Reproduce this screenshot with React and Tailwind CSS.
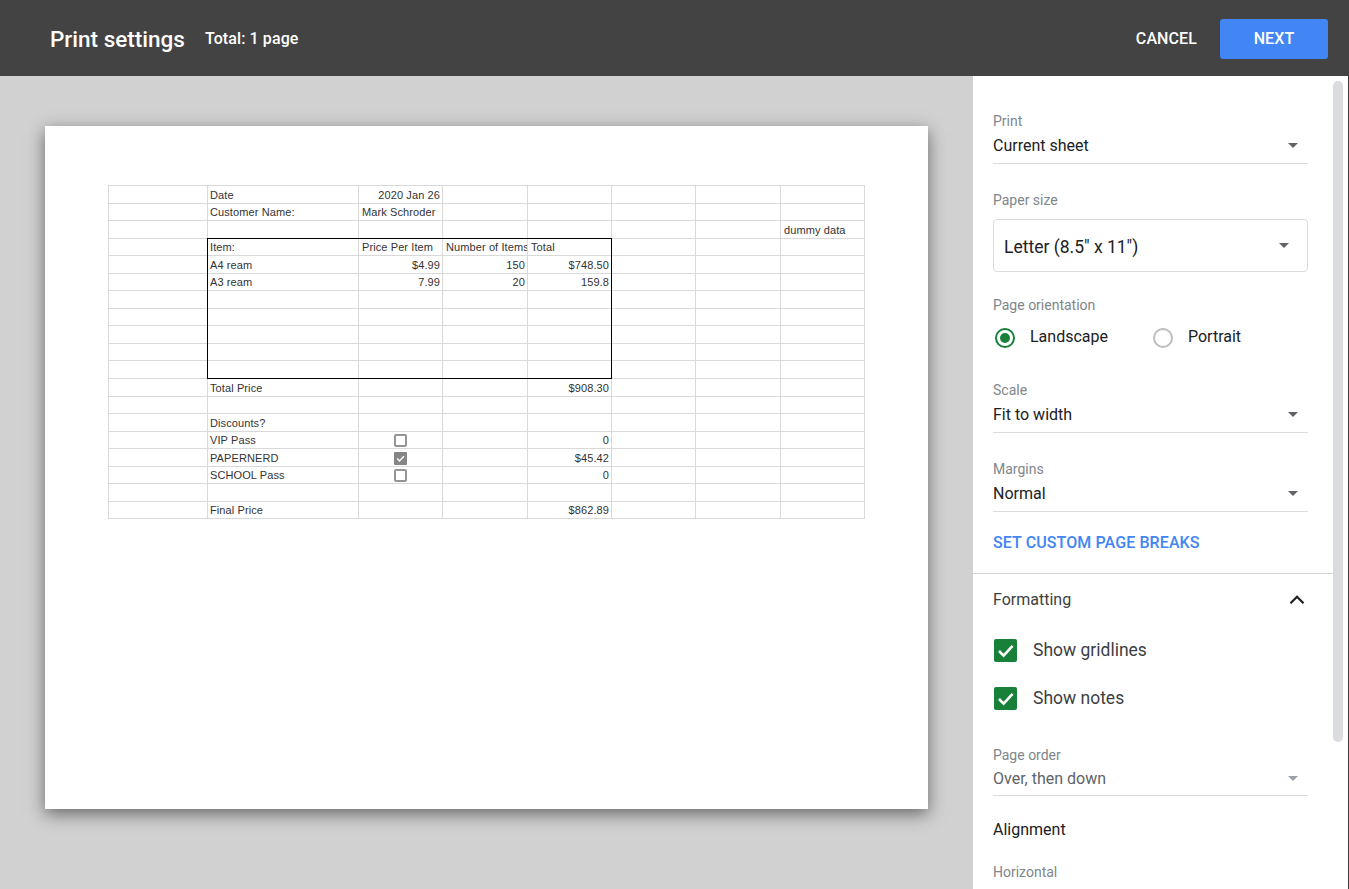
import React from "react";

const rows = [
  { h: 18, cells: { 1: "Date", 2: ["2020 Jan 26", "r"] } },
  { h: 17, cells: { 1: "Customer Name:", 2: "Mark Schroder" } },
  { h: 18, cells: { 7: "dummy data" } },
  { h: 17, cells: { 1: "Item:", 2: "Price Per Item", 3: "Number of Items", 4: "Total" } },
  { h: 18, cells: { 1: "A4 ream", 2: ["$4.99", "r"], 3: ["150", "r"], 4: ["$748.50", "r"] } },
  { h: 17, cells: { 1: "A3 ream", 2: ["7.99", "r"], 3: ["20", "r"], 4: ["159.8", "r"] } },
  { h: 18, cells: {} },
  { h: 17, cells: {} },
  { h: 18, cells: {} },
  { h: 17, cells: {} },
  { h: 18, cells: {} },
  { h: 18, cells: { 1: "Total Price", 4: ["$908.30", "r"] } },
  { h: 17, cells: {} },
  { h: 18, cells: { 1: "Discounts?" } },
  { h: 17, cells: { 1: "VIP Pass", 2: ["off", "box"], 4: ["0", "r"] } },
  { h: 18, cells: { 1: "PAPERNERD", 2: ["on", "box"], 4: ["$45.42", "r"] } },
  { h: 17, cells: { 1: "SCHOOL Pass", 2: ["off", "box"], 4: ["0", "r"] } },
  { h: 18, cells: {} },
  { h: 17, cells: { 1: "Final Price", 4: ["$862.89", "r"] } },
];

const colWidths = [99, 151, 84, 85, 84, 84, 85, 84];

function SheetBox({ checked }) {
  if (checked) {
    return (
      <span className="flex h-[13px] w-[13px] items-center justify-center rounded-[1px] bg-[#858585]">
        <svg width="11" height="11" viewBox="0 0 11 11" fill="none">
          <path d="M2.2 5.6 4.5 7.9 8.9 3.2" stroke="#fff" strokeWidth="1.4" />
        </svg>
      </span>
    );
  }
  return <span className="block h-[13px] w-[13px] rounded-[2px] border-2 border-[#959595] bg-white" />;
}

function Cell({ value, width, height, col }) {
  const [text, kind] = Array.isArray(value) ? value : [value, "l"];
  let inner = null;
  if (kind === "box") {
    inner = <SheetBox checked={text === "on"} />;
  } else if (text) {
    inner = <span className="whitespace-nowrap">{text}</span>;
  }
  // odd rows are a pixel shorter, so their text sits a pixel higher
  const top = kind === "box" || height === 17 ? "pt-px" : "pt-[2px]";
  const align =
    kind === "box" ? "justify-center" : kind === "r" ? "justify-end pr-[2px]" : col === 1 ? "pl-[2px]" : "pl-[3px]";
  return (
    <div
      style={{ width, height }}
      className={`flex shrink-0 items-center overflow-hidden border-r border-b border-[#d9d9d9] ${top} ${align}`}
    >
      {inner}
    </div>
  );
}

function Sheet() {
  return (
    <div className="relative w-[757px] border-t border-l border-[#d9d9d9] font-['Liberation_Sans',sans-serif] text-[11px] tracking-[0.1px] text-[#333]">
      {rows.map((row, i) => (
        <div key={i} className="flex">
          {colWidths.map((w, c) => (
            <Cell key={c} value={row.cells[c]} width={w} height={row.h} col={c} />
          ))}
        </div>
      ))}
      {/* black range border over the item block */}
      <div className="absolute top-[52px] left-[98px] h-[141px] w-[405px] border border-black" />
    </div>
  );
}

function Caret({ color = "#5f6368", className = "" }) {
  return (
    <svg width="10" height="5" viewBox="0 0 10 5" className={className}>
      <path d="M0 0h10L5 5z" fill={color} />
    </svg>
  );
}

function SelectField({ label, value, muted, className = "" }) {
  return (
    <div className={`w-[315px] ${className}`}>
      <div className="text-[14px] leading-[18px] text-[#80868b]">{label}</div>
      <div
        className={`flex items-center justify-between border-b border-[#dadce0] pr-[10px] pb-[2px] ${
          muted ? "h-[32px]" : "h-[34px]"
        }`}
      >
        <span className={`text-[16px] ${muted ? "text-[#5f6368]" : "text-[#202124]"}`}>{value}</span>
        <Caret color={muted ? "#9aa0a6" : "#5f6368"} />
      </div>
    </div>
  );
}

function Radio({ label, checked }) {
  return (
    <div className="flex items-center gap-[15px]">
      <span
        className={`flex h-[20px] w-[20px] items-center justify-center rounded-full border-2 ${
          checked ? "border-[#188038]" : "border-[#bdbdbd]"
        }`}
      >
        {checked && <span className="h-[10px] w-[10px] rounded-full bg-[#188038]" />}
      </span>
      <span className="-mt-[1px] text-[16px] text-[#202124]">{label}</span>
    </div>
  );
}

function CheckRow({ label }) {
  return (
    <div className="flex h-[24px] items-center gap-[16px] pl-px">
      <span className="flex h-[23px] w-[23px] items-center justify-center rounded-[2px] bg-[#188038]">
        <svg width="17" height="17" viewBox="0 0 17 17" fill="none">
          <path d="M2 9 6.6 13.6 15.6 3.8" stroke="#fff" strokeWidth="2.6" />
        </svg>
      </span>
      <span className="text-[17.5px] text-[#3c4043]">{label}</span>
    </div>
  );
}

function Sidebar() {
  return (
    <aside className="relative w-[376px] shrink-0 overflow-hidden border-r border-[#3a3a3a] bg-white">
      {/* scrollbar */}
      <div className="absolute top-[5px] left-[360px] h-[661px] w-[10px] rounded-[5px] bg-[#dadce0]" />

      <div className="px-[20px] pt-[36px]">
        <SelectField label="Print" value="Current sheet" />

        <div className="mt-[27px] text-[14px] leading-[18px] text-[#80868b]">Paper size</div>
        <div className="mt-[10px] flex h-[53px] w-[315px] items-center justify-between rounded-[4px] border border-[#dadce0] pr-[18px] pl-[10px]">
          <span className="pt-[4px] text-[17.5px] text-[#202124]">Letter (8.5" x 11")</span>
          <Caret />
        </div>

        <div className="mt-[24px] text-[14px] leading-[18px] text-[#80868b]">Page orientation</div>
        <div className="mt-[12px] flex gap-[45px] pl-[2px]">
          <Radio label="Landscape" checked />
          <Radio label="Portrait" />
        </div>

        <SelectField label="Scale" value="Fit to width" className="mt-[32px]" />
        <SelectField label="Margins" value="Normal" className="mt-[27px]" />

        <div className="mt-[20px] text-[16px] leading-[22px] font-medium tracking-[0.1px] text-[#4285f4]">
          SET CUSTOM PAGE BREAKS
        </div>
      </div>

      <div className="mt-[19px] mr-[11px] border-t border-[#d5d5d5] px-[20px] pt-[15px]">
        <div className="flex h-[22px] w-[315px] items-center justify-between">
          <span className="text-[16px] text-[#3c4043]">Formatting</span>
          <svg width="20" height="20" viewBox="0 0 20 20" fill="none" className="mr-[1px]">
            <path d="M3.5 13.2 10 6.8l6.5 6.4" stroke="#202124" strokeWidth="2.3" />
          </svg>
        </div>
        <div className="mt-[27px] flex flex-col gap-[24px]">
          <CheckRow label="Show gridlines" />
          <CheckRow label="Show notes" />
        </div>
        <SelectField label="Page order" value="Over, then down" muted className="mt-[36px]" />
        <div className="mt-[23px] text-[16px] leading-[22px] text-[#202124]">Alignment</div>
        <div className="mt-[22px] text-[14px] leading-[18px] text-[#80868b]">Horizontal</div>
      </div>
    </aside>
  );
}

export default function App() {
  return (
    <div className="flex h-[889px] flex-col overflow-hidden font-['Roboto',sans-serif]">
      <header className="flex h-[76px] shrink-0 items-center bg-[#434343] pt-[2px] pr-[21px] pl-[50px] text-white">
        <h1 className="mt-[2px] text-[22.5px] font-medium">Print settings</h1>
        <span className="ml-[20px] text-[16px] font-medium tracking-[0.1px]">Total: 1 page</span>
        <button className="mr-[23px] ml-auto text-[16px] font-medium tracking-[0.1px]">CANCEL</button>
        <button className="h-[40px] w-[108px] rounded-[3px] bg-[#4285f4] text-[16px] font-medium tracking-[0.1px]">
          NEXT
        </button>
      </header>

      <div className="flex min-h-0 flex-1">
        <main className="min-w-0 flex-1 bg-[#d1d1d1] pt-[50px] pl-[45px]">
          <div className="h-[683px] w-[883px] bg-white pt-[59px] pl-[63px] shadow-[0_5px_16px_rgba(0,0,0,0.5)]">
            <Sheet />
          </div>
        </main>
        <Sidebar />
      </div>
    </div>
  );
}
